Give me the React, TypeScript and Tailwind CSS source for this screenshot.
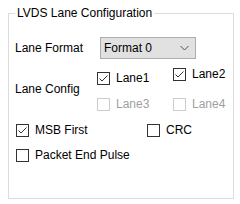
import React from "react";

type CheckProps = {
  label: string;
  checked?: boolean;
  disabled?: boolean;
  className?: string;
};

const CheckBox = ({ label, checked = false, disabled = false, className = "" }: CheckProps) => {
  return (
    <div className={`flex items-center gap-[6px] ${className}`}>
      <div
        className={`w-[13px] h-[13px] border bg-white flex items-center justify-center ${
          disabled ? "border-[#cccccc]" : "border-[#333333]"
        }`}
      >
        {checked && (
          <svg width="11" height="11" viewBox="0 0 11 11">
            <polyline points="1.5,5.5 4,8 9.5,2.5" fill="none" stroke="#333333" strokeWidth="1" />
          </svg>
        )}
      </div>
      <span className={`text-[12px] leading-[14px] ${disabled ? "text-[#a0a0a0]" : "text-black"}`}>
        {label}
      </span>
    </div>
  );
};

export default function App() {
  return (
    <div
      className="w-[240px] h-[204px] bg-white overflow-hidden"
      style={{ fontFamily: '"Liberation Sans", Arial, sans-serif' }}
    >
      <fieldset className="ml-[8px] mt-[6px] w-[226px] h-[193px] border border-[#dcdcdc]">
        <legend className="ml-[6px] px-[2px] text-[12px] leading-[14px] text-black">
          LVDS Lane Configuration
        </legend>
        <div className="flex flex-col pl-[6px]">
          <div className="mt-[17px] h-[22px] flex items-center">
            <span className="w-[85px] text-[12px] leading-[14px] text-black">Lane Format</span>
            <div className="w-[96px] h-[22px] bg-[#e1e1e1] border border-[#adadad] flex items-center justify-between pl-[3px] pr-[6px]">
              <span className="text-[12px] leading-[14px] text-black">Format 0</span>
              <svg width="9" height="6" viewBox="0 0 9 6">
                <polyline points="0.5,1 4.5,5 8.5,1" fill="none" stroke="#555555" strokeWidth="1" />
              </svg>
            </div>
          </div>

          <div className="mt-[8px] flex">
            <span className="w-[82px] self-center text-[12px] leading-[14px] text-black">Lane Config</span>
            <div className="flex flex-col">
              <div className="h-[18px] flex">
                <CheckBox label="Lane1" checked className="w-[76px] self-end" />
                <CheckBox label="Lane2" checked className="self-start" />
              </div>
              <div className="mt-[12px] flex">
                <CheckBox label="Lane3" disabled className="w-[76px]" />
                <CheckBox label="Lane4" disabled />
              </div>
            </div>
          </div>

          <div className="mt-[12px] ml-[1px] flex">
            <CheckBox label="MSB First" checked className="w-[131px]" />
            <CheckBox label="CRC" />
          </div>

          <div className="mt-[11px] ml-[1px] flex">
            <CheckBox label="Packet End Pulse" />
          </div>
        </div>
      </fieldset>
    </div>
  );
}
